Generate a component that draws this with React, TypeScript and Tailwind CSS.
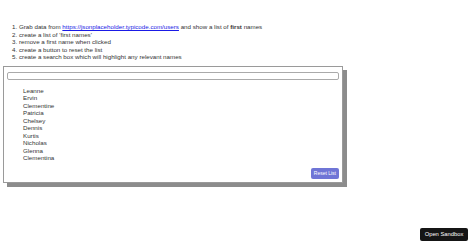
import React from "react";

const names = ["Leanne","Ervin","Clementine","Patricia","Chelsey","Dennis","Kurtis","Nicholas","Glenna","Clementina"];

export default function App() {
  return (
    <div className="relative w-[474px] h-[248px] bg-white text-[#333] overflow-hidden" style={{ fontFamily: '"Liberation Sans", Arial, sans-serif' }}>
      <ol className="list-decimal pl-[19px] pt-[23px] text-[6.2px] leading-[7.5px]">
        <li>Grab data from <a className="text-[#1a1ae6] underline">https://jsonplaceholder.typicode.com/users</a> and show a list of <b>first</b> names</li>
        <li>create a list of 'first names'</li>
        <li>remove a first name when clicked</li>
        <li>create a button to reset the list</li>
        <li>create a search box which will highlight any relevant names</li>
      </ol>
      <div className="ml-[3px] mt-[5px] w-[340px] h-[117px] border border-[#9a9a9a] shadow-[4px_4px_0_0_#8c8c8c] flex flex-col">
        <div className="mx-[3px] mt-[5px] h-[8px] border border-[#aaa] rounded-[2px]" />
        <ul className="pl-[19px] mt-[7px] text-[6.2px] leading-[7.5px]">
          {names.map((n) => (<li key={n}>{n}</li>))}
        </ul>
        <div className="mt-auto mb-[3px] mr-[3px] flex justify-end">
          <button className="bg-[#6f75d6] text-white text-[5px] leading-[11px] h-[11px] px-[3px] rounded-[2px]">Reset List</button>
        </div>
      </div>
      <div className="absolute left-[420px] top-[228px] w-[48px] h-[13px] bg-[#151515] rounded-[2px] text-white text-[5.8px] flex items-center justify-center">Open Sandbox</div>
    </div>
  );
}
